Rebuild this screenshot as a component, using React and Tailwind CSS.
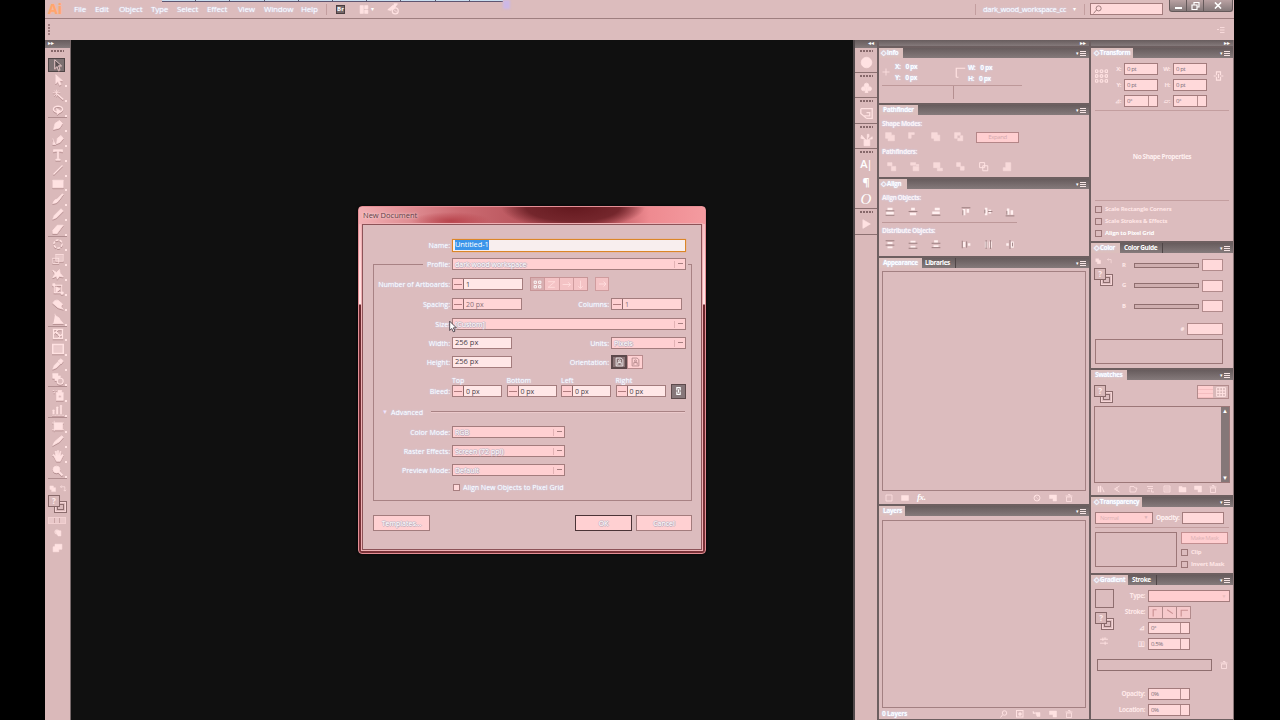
import React from "react";

const glow = "[text-shadow:0_0_1px_#ccd3f4,0_0_2px_#d5dbf2]";
const dark = "bg-gradient-to-b from-[#675c5d] to-[#857a7b]";
const heading = `ml-[3px] text-[6.500px] leading-[8px] font-bold text-[#fff4f4] ${glow}`;
const pale = "text-white [text-shadow:1px_0_0_#bcafc0,-1px_0_0_#cdbfcb,0_1px_0_#b8a8b8,0_-1px_0_#cdbfcb]";

function Svg({ children, className = "w-[13px] h-[13px]" }) {
  return (
    <svg viewBox="0 0 16 16" className={`shrink-0 ${className}`} fill="#ffe2e2" stroke="#ffe2e2" strokeWidth="1">
      {children}
    </svg>
  );
}

const P = (d, fill = true) => <path d={d} {...(fill ? {} : { fill: "none", strokeWidth: 1.6 })} />;

const toolGroups = [
  {
    h: "h-[61px]",
    items: [
      <path key="a" d="M5 1v12l3-3 2 5 2-1-2-5h4z" fill="#5b4f51" />,
      P("M5 1v12l3-3 2 5 2-1-2-5h4z"),
      <g key="w"><path d="M7 7l8 7" strokeWidth="2" /><path d="M6 1v9M1 5h10M3 2l6 7M9 2L3 9" /></g>,
      <g key="l"><ellipse cx="8" cy="7" rx="6" ry="4" fill="none" strokeWidth="2" /><path d="M6 6l1 8 5-4z" /></g>,
    ],
  },
  {
    h: "h-[119px]",
    items: [
      P("M2 14l2-8 6-4 4 4-4 6z"),
      P("M6 13l1-7 5-4 3 4-4 5zM1 6q2 3 0 8h4"),
      P("M2 4V1h12v3h-1l-1-1H9v10l2 1v1H5v-1l2-1V3H4L3 4z"),
      P("M2 14L14 2", false),
      P("M1 3h14v10H1z"),
      P("M1 14q2-6 6-6l7-7 1 1-6 8q-2 4-8 4z"),
      P("M1 15l2-5 9-9 3 3-9 9z"),
      P("M1 10l6-7h8l-6 8-2 3H1z"),
    ],
  },
  {
    h: "h-[90px]",
    items: [
      <circle key="c" cx="8" cy="8" r="5.5" fill="none" strokeWidth="2" strokeDasharray="4 1.5" />,
      <g key="s"><rect x="1" y="7" width="8" height="7" fill="none" /><rect x="5" y="2" width="10" height="9" fillOpacity=".6" /></g>,
      P("M1 3l5 3 4-4 1 5 4 5-5-1-3 4-1-4-5 2 3-5z"),
      <g key="f"><rect x="3" y="3" width="10" height="10" fill="none" strokeWidth="1.5" /><path d="M1 1h3v3H1zM12 12h3v3h-3zM5 5v8l6-5z" /></g>,
      P("M1 7q2-5 7-4l6 5-2 4 3 3-7-2z"),
      P("M4 1v13M4 3l6 4v6H2M10 8l5 6H1"),
    ],
  },
  {
    h: "h-[60px]",
    items: [
      <g key="m"><rect x="2" y="2" width="12" height="12" fill="none" strokeWidth="2" /><path d="M2 8q4-5 6 0t6 0M8 2q-5 4 0 6t0 6" fill="none" strokeWidth="1.7" /></g>,
      <g key="g"><rect x="1" y="2" width="14" height="12" fillOpacity=".65" strokeWidth="2" /></g>,
      P("M1 15l2-5 5-5 3 3-5 5zM8 4l4-3 3 3-3 4z"),
      <g key="b"><rect x="1" y="1" width="7" height="6" /><rect x="4" y="4" width="7" height="6" /><circle cx="11" cy="11" r="4" fill="#dcbcbd" strokeWidth="1.6" /></g>,
    ],
  },
  {
    h: "h-[31px]",
    items: [
      <g key="y"><path d="M1 2h2M2 5h2M5 2h1" /><rect x="6" y="5" width="9" height="10" /><path d="M8 2h5v3H8z" /><circle cx="10.500" cy="10" r="2" fill="#dcbcbd" /></g>,
      P("M1 14V8h2v6M6 14V4h2v10M11 14V2h2v12M0 15h16"),
    ],
  },
  {
    h: "h-[61px]",
    items: [
      P("M3 4h11v9H3zM0 4h16M0 13h16M3 1v14"),
      P("M1 14q2-6 7-9l5-4 2 2-5 6z"),
      P("M3 9L1 7l1-1 3 2-1-6h2l1 5V1h2v6l2-5h1l-1 6 3-2 1 1-4 8H6z"),
      <g key="z"><circle cx="6" cy="6" r="4.500" /><path d="M9 9l5 5" strokeWidth="2.500" /></g>,
    ],
  },
];

function Grip() {
  return <div className="mx-auto h-[2px] w-[13px] shrink-0 bg-[repeating-linear-gradient(90deg,#86686a_0_2px,transparent_2px_3px)]" />;
}

function FillStroke({ mark = "?" }) {
  return (
    <div className="grid h-[18px] w-[19px] shrink-0 grid-cols-[6px_6px_7px] grid-rows-[6px_6px_6px]">
      <div className="col-start-2 col-end-4 row-start-2 row-end-4 border-2 border-[#f6d5d6] p-[1px] outline-1 -outline-offset-1 outline-[#8c6c6d]">
        <div className="h-full border border-[#8c6c6d]" />
      </div>
      <div className="z-10 col-start-1 col-end-3 row-start-1 row-end-3 flex items-center justify-center border border-[#876768] bg-[#d9b8b9] text-[8px] leading-none font-bold text-[#ffeaea]">
        {mark}
      </div>
    </div>
  );
}

function Toolbar() {
  return (
    <div className="flex w-[26px] shrink-0 flex-col border-r border-[#77696a] bg-[#dab9ba]">
      <div className={`h-[8px] pl-[3px] text-[6px] leading-[7px] text-white ${dark}`}>▸▸</div>
      <div className="flex h-[9px] flex-col pt-[2px]"><Grip /></div>
      {toolGroups.map((g, gi) => (
        <div key={gi} className={`mx-[3px] flex shrink-0 flex-col justify-around border-b border-[#b18e90] ${g.h}`}>
          {g.items.map((it, i) => (
            <div
              key={i}
              className={
                gi === 0 && i === 0
                  ? "mr-[2px] flex h-[14px] items-center justify-center border border-[#4f4546] bg-[#7c7071]"
                  : "flex h-[14px] items-center justify-center"
              }
            >
              <Svg className="h-[12px] w-[12px] drop-shadow-[0_1px_0_#b58f91]">{it}</Svg>
              {gi + i > 0 && <span className="-mr-[3px] ml-px h-[2px] w-[2px] self-end bg-[#ffe2e2]" />}
            </div>
          ))}
        </div>
      ))}
      <div className="mt-[2px] flex h-[14px] shrink-0 items-center gap-[4px] pl-[4px]">
        <Svg className="h-[7px] w-[7px]">{P("M2 2h8v8H2zM6 6h9v9H6z")}</Svg>
        <Svg className="h-[7px] w-[7px]">{P("M1 4h10v10M4 1L1 4l3 3M8 11l3 3 3-3", false)}</Svg>
      </div>
      <div className="pl-[3px]"><FillStroke /></div>
      <div className="mt-[4px] ml-[3px] flex h-[7px] w-[18px] shrink-0 divide-x divide-[#caa5a6] border border-[#f2d0d1] bg-[#e9c8c9]">
        <span className="flex-1" /><span className="flex-1" /><span className="flex-1" />
      </div>
      <div className="mt-[4px] flex h-[10px] justify-center"><Svg className="h-[9px] w-[9px]"><circle cx="7" cy="7" r="4" fillOpacity=".6" /><path d="M5 5h9v9H9z" /></Svg></div>
      <div className="mt-[5px] flex h-[10px] justify-center"><Svg className="h-[10px] w-[13px]">{P("M4 2h11v8H4zM1 6h9v8H1z")}</Svg></div>
    </div>
  );
}

function Tab({ children, active, className = "" }) {
  return (
    <div
      className={`flex shrink-0 items-center pt-px text-[6.5px] leading-none font-bold whitespace-nowrap text-white ${
        active ? `bg-[#dcbfbd] ${glow}` : "border-r border-[#4f4546]"
      } ${className}`}
    >
      {children}
    </div>
  );
}

function Panel({ tabs, className, children }) {
  return (
    <section className={`flex shrink-0 flex-col border-t-2 border-[#6d5f60] bg-[#dcbcbe] ${className}`}>
      <div className={`flex h-[10px] shrink-0 ${dark}`}>
        {tabs}
        <div className="mr-[3px] ml-auto flex items-center gap-px">
          <span className="text-[5px] leading-none text-white">▾</span>
          <span className="h-[5px] w-[6px] border-y border-[#f6e4e4] bg-[linear-gradient(transparent_1px,#f6e4e4_1px,#f6e4e4_2px,transparent_2px)]" />
        </div>
      </div>
      {children}
    </section>
  );
}

function Field({ className = "", edge = "border-[#a37c7d]", children }) {
  return (
    <div className={`flex shrink-0 items-center border whitespace-nowrap leading-none ${edge} ${className}`}>{children}</div>
  );
}

function MiniField({ value, split, className }) {
  return (
    <Field className={`h-[12px] bg-[#ffd9da] pl-[2px] text-[6px] text-[#7b6e78] ${className}`}>
      {value}
      {split && <span className="ml-auto h-full w-[9px] border-l border-[#b48d8e]" />}
    </Field>
  );
}

function Check({ label, className = "" }) {
  return (
    <div className={`flex h-[8px] items-center gap-[3px] text-[6px] leading-none font-bold tracking-[-0.22px] whitespace-nowrap text-[#ffe6e6] ${className}`}>
      <span className="h-[7px] w-[7px] shrink-0 border border-[#9c7778]" />
      {label}
    </div>
  );
}

const shapes = [
  "M1 1h9v4h5v9H5v-4H1z",
  "M1 1h9v3H5v6H1z",
  "M1 1h9v9H1zM5 5h9v9H5z",
  "M1 1h9v4H5v5H1zM10 6h4v8H6v-4h4z",
];
const finders = [
  "M1 1h7v5H1zM7 7h7v7H7z",
  "M1 1h8v4H1zM5 7h9v7H5zM10 4h4v2h-4z",
  "M1 1h10v8H1zM7 10h8v4H7z",
  "M1 1h6v6H1zM7 7h6v6H7z",
];

function InfoColumn() {
  return (
    <div className="flex w-[212px] shrink-0 flex-col border-r-2 border-[#6d5f60] tracking-[-0.42px]">
      <div className={`h-[6px] pr-[3px] text-right text-[6px] leading-[7px] tracking-normal text-white ${dark}`}>▸▸</div>
      <Panel className="h-[57px]" tabs={<Tab active className="w-[24px] pl-[2px]">◇ Info</Tab>}>
        <div className={`flex px-[3px] pt-[3px] text-[6.500px] leading-[11px] font-bold text-white ${glow}`}>
          <Svg className="mt-[7px] h-[8px] w-[8px]">{P("M8 1v14M1 8h14", false)}</Svg>
          <div className="ml-[5px] w-[59px]">X: &nbsp; &nbsp;0 px<br />Y: &nbsp; &nbsp;0 px</div>
          <div className="flex w-[70px] pt-px">
            <Svg className="mt-[4px] h-[12px] w-[12px]">{P("M3 15V3h12M3 15h3", false)}</Svg>
            <div className="ml-[2px] whitespace-nowrap">W: &nbsp; &nbsp;0 px<br />H: &nbsp; &nbsp;0 px</div>
          </div>
        </div>
        <div className="mt-[1px] ml-[3px] h-[14px] w-[140px] border-t border-[#bd9899]">
          <div className="ml-[71px] h-[13px] border-l border-[#b48f90]" />
        </div>
      </Panel>
      <Panel className="h-[74px]" tabs={<Tab active className="w-[39px] pl-[4px]">Pathfinder</Tab>}>
        <div className={`mt-[5px] ${heading}`}>Shape Modes:</div>
        <div className="mt-[3px] flex h-[12px] items-center gap-[13px] pl-[6px]">
          {shapes.map((d, i) => <Svg key={i} className="h-[10px] w-[10px] opacity-80">{P(d)}</Svg>)}
          <Field edge="border-[#b48688]" className="-ml-px h-[11px] w-[43px] justify-center bg-[#ffced0] text-[6px] text-[#d3a9ae]">Expand</Field>
        </div>
        <div className={`mt-[5px] ${heading}`}>Pathfinders:</div>
        <div className="mt-[6px] flex h-[10px] items-center gap-[13px] pl-[8px]">
          {finders.map((d, i) => <Svg key={i} className="h-[10px] w-[10px] opacity-80">{P(d)}</Svg>)}
          <Svg className="h-[10px] w-[10px]">{P("M1 1h8v8H1zM6 6h8v8H6z", false)}</Svg>
          <Svg className="h-[10px] w-[10px] opacity-80">{P("M6 1h8v13H2V9h4z")}</Svg>
        </div>
      </Panel>
      <Panel className="h-[79px]" tabs={<Tab active className="w-[28px] pl-[2px]">◇ Align</Tab>}>
        <div className={`mt-[5px] ${heading}`}>Align Objects:</div>
        <AlignRow kind="align" />
        <div className="mt-[5px] ml-[3px] h-px w-[135px] shrink-0 bg-[#bd9899]" />
        <div className={`mt-[4px] ${heading}`}>Distribute Objects:</div>
        <AlignRow kind="distribute" />
      </Panel>
      <Panel
        className="h-[248px]"
        tabs={<><Tab active className="w-[43px] pl-[4px]">Appearance</Tab><Tab className="w-[34px] pl-[3px]">Libraries</Tab></>}
      >
        <div className="mx-[3px] mt-[3px] h-[220px] shrink-0 border border-[#a38082]" />
        <div className="flex h-[13px] items-center gap-[8px] pl-[6px]">
          <Svg className="h-[8px] w-[8px]">{P("M2 2h12v12H2z", false)}</Svg>
          <Svg className="h-[8px] w-[8px]">{P("M1 3h14v10H1z")}</Svg>
          <span className="font-['Liberation_Serif',serif] text-[9px] leading-none font-bold text-white italic">fx.</span>
          <span className="ml-auto flex gap-[8px] pr-[16px]">
            <Svg className="h-[8px] w-[8px]"><circle cx="8" cy="8" r="6" fill="none" strokeWidth="2" /><path d="M4 4l8 8" /></Svg>
            <NewIcon /><Trash />
          </span>
        </div>
      </Panel>
      <Panel className="h-[215px]" tabs={<Tab active className="w-[26px] pl-[4px]">Layers</Tab>}>
        <div className="mx-[3px] mt-[4px] h-[188px] shrink-0 border border-[#a38082]" />
        <div className={`flex h-[13px] items-center pl-[3px] text-[6.500px] font-bold tracking-[-0.2px] text-white ${glow}`}>
          0 Layers
          <span className="ml-auto flex gap-[8px] pr-[16px]">
            <Svg className="h-[8px] w-[8px]"><circle cx="9" cy="6" r="4.500" fill="none" strokeWidth="2" /><path d="M5 10l-4 5" strokeWidth="2" /></Svg>
            <Svg className="h-[8px] w-[8px]"><rect x="1" y="1" width="13" height="13" fill="none" strokeWidth="2" /><circle cx="8" cy="8" r="3" /></Svg>
            <Svg className="h-[8px] w-[9px]">{P("M1 2v5h5M6 5h9v8H9z")}</Svg>
            <NewIcon /><Trash />
          </span>
        </div>
      </Panel>
      <div className="h-px bg-[#6d5f60]" />
    </div>
  );
}

const NewIcon = () => <Svg className="h-[8px] w-[8px]">{P("M1 2h14v12H8V9H1z")}</Svg>;
const Trash = () => <Svg className="h-[8px] w-[8px]">{P("M3 6h10v9H3zM1 4h14M6 1h4v3", false)}</Svg>;

function AlignRow({ kind }) {
  const a = kind === "align";
  const horiz = a
    ? [["M4 2h8v4H4zM2 8h12v5H2z", "M1 7h14M1 14h14"], ["M5 2h6v4H5zM3 10h10v4H3z", "M1 8h14"], ["M6 2h8v4H6zM2 8h12v4H2z", "M1 14h14"]]
    : [["M4 4h8v3H4zM4 11h8v3H4z", "M1 2h14M1 9h14"], ["M4 2h8v3H4zM4 10h8v3H4z", "M1 6h14M1 14h14"], ["M5 1h6v4H5zM4 9h8v3H4z", "M1 6h14M1 13h14"]];
  const vert = a
    ? [["M3 4h4v10H3zM9 4h4v6H9z", "M1 2h14M3 6v8"], ["M3 2h4v12H3zM9 5h4v6H9z", "M3 5v6M8 8h7"], ["M3 3h4v10H3zM9 6h4v7H9z", "M1 15h14M3 7v6"]]
    : [["M3 4h4v8H3zM11 6h4v4h-4z", "M2 2v12M9 3v10"], ["M3 3h4v10H3zM10 3h4v10h-4z", "M5 1v14M12 1v14"], ["M2 6h4v4H2zM9 3h5v10H9z", "M8 1v14M12 5v6"]];
  const draw = ([shape, rule]) => (
    <svg key={shape} viewBox="0 0 16 16" className="h-[11px] w-[10px]"><path d={shape} fill="#fff0f0" /><path d={rule} stroke="#8f7274" strokeWidth="1.300" /></svg>
  );
  return (
    <div className="mt-[4px] flex h-[11px] shrink-0 items-center pl-[6px]">
      <div className="flex gap-[13px]">{horiz.map(draw)}</div>
      <div className="ml-[20px] flex gap-[12px]">{vert.map(draw)}</div>
    </div>
  );
}

function PropertiesColumn() {
  const label = "shrink-0 pr-[3px] text-right text-[6px] font-bold text-[#ffe6e6]";
  return (
    <div className="flex w-[143px] shrink-0 flex-col border-r border-[#8c7879] tracking-[-0.42px]">
      <div className={`h-[6px] pr-[3px] text-right text-[6px] leading-[7px] tracking-normal text-white ${dark}`}>▸▸</div>
      <Panel className="h-[195px]" tabs={<Tab active className="w-[42px] pl-[3px]">◇ Transform</Tab>}>
        <div className="mx-[4px] flex h-[53px] shrink-0 border-b border-[#c39e9f]">
          <Svg className="mt-[11px] h-[14px] w-[13px]">
            {[2, 8, 14].map((y) => [2, 8, 14].map((x) => <circle key={`${x}${y}`} cx={x} cy={y} r="1.700" fill="none" strokeWidth="1.500" />))}
          </Svg>
          <div className="mt-[5px] flex flex-col gap-[4px]">
            {[["X:", "0 pt", "W:", "0 pt"], ["Y:", "0 pt", "H:", "0 pt"], ["⊿:", "0°", "▱:", "0°"]].map((r, i) => (
              <div key={i} className="flex items-center">
                <span className={`${label} w-[16px]`}>{r[0]}</span>
                <MiniField value={r[1]} split={i === 2} className="w-[34px]" />
                <span className={`${label} w-[15px]`}>{r[2]}</span>
                <MiniField value={r[3]} split={i === 2} className="w-[34px]" />
              </div>
            ))}
          </div>
          <Svg className="mt-[12px] ml-[6px] h-[12px] w-[11px]">{P("M5 7V2h6v5M5 9v5h6V9M8 5v6M1 8h3M12 8h3", false)}</Svg>
        </div>
        <div className="mx-[4px] flex h-[90px] shrink-0 items-center justify-center border-b border-[#c39e9f] pt-[2px] text-[6.500px] font-bold text-[#fff0f0]">No Shape Properties</div>
        <Check className="mt-[4px] ml-[4px]" label="Scale Rectangle Corners" />
        <Check className="mt-[4px] ml-[4px]" label="Scale Strokes & Effects" />
        <Check className="mt-[4px] ml-[4px] text-white" label="Align to Pixel Grid" />
      </Panel>
      <Panel
        className="h-[127px]"
        tabs={<><Tab active className="w-[29px] pl-[3px]">◇ Color</Tab><Tab className="w-[43px] pl-[4px]">Color Guide</Tab></>}
      >
        <div className="flex h-[64px] shrink-0 pl-[3px]">
          <div className="w-[28px]">
            <div className="flex h-[15px] items-center gap-[6px] pl-px">
              <Svg className="h-[6px] w-[6px]">{P("M2 2h8v8H2zM6 6h9v9H6z")}</Svg>
              <Svg className="h-[6px] w-[6px]">{P("M1 4h10v10M4 1L1 4l3 3", false)}</Svg>
            </div>
            <FillStroke />
          </div>
          <div className="flex flex-col gap-[8.500px] pt-[6px]">
            {["R", "G", "B"].map((c) => (
              <div key={c} className="flex h-[12px] items-center">
                <span className="w-[12px] text-[6px] font-bold text-[#ffe9e9]">{c}</span>
                <span className="h-[5px] w-[65px] border border-[#8f6e6f] bg-[#cfaeaf]" />
                <span className="ml-[3px] h-[12px] w-[21px] border border-[#b28b8c] bg-[#ffd9da]" />
              </div>
            ))}
          </div>
        </div>
        <div className="mt-[6px] mr-[10px] flex shrink-0 items-center justify-end gap-[3px] text-[6px] font-bold text-[#ffe9e9]">
          #<span className="h-[12px] w-[36px] border border-[#b28b8c] bg-[#ffd9da]" />
        </div>
        <div className="mt-[4px] ml-[4px] h-[25px] w-[128px] shrink-0 border border-[#9c7778]" />
      </Panel>
      <Panel className="h-[127px]" tabs={<Tab active className="w-[36px] pl-[4px]">Swatches</Tab>}>
        <div className="flex h-[26px] shrink-0 pt-[5px] pr-[4px] pl-[3px]">
          <FillStroke />
          <div className="ml-auto flex h-[14px] w-[32px] border border-[#b28b8c]">
            <span className="flex-1 bg-[repeating-linear-gradient(#ffcfd0_0_3px,#f4bdbf_3px_4px)]" />
            <span className="flex flex-1 items-center justify-center bg-[#d9b8b9]"><Svg className="h-[10px] w-[10px]">{P("M1 1h14v14H1zM6 1v14M10.500 1v14M1 6h14M1 10.500h14", false)}</Svg></span>
          </div>
        </div>
        <div className="mr-[3px] ml-[3px] flex h-[77px] shrink-0 border border-[#9c7778]">
          <div className="ml-auto flex w-[8px] flex-col justify-between bg-[#857778] text-center text-[6px] leading-[8px] tracking-normal text-white"><span>▲</span><span>▼</span></div>
        </div>
        <div className="flex h-[13px] items-center justify-between pr-[16px] pl-[5px]">
          <Svg className="h-[8px] w-[10px]">{P("M2 3v11h2V3zM6 2v12h2V2zM10 4l3 10h2")}</Svg>
          <Svg className="h-[8px] w-[8px]">{P("M13 2L3 8l10 6M8 4v8", false)}</Svg>
          <Svg className="h-[8px] w-[11px]">{P("M1 3h8l2 3h4l-3 8H1z", false)}</Svg>
          <Svg className="h-[8px] w-[9px]">{P("M1 3h12M3 7h10M1 12h6M10 9v5h5", false)}</Svg>
          <Svg className="h-[8px] w-[8px]">{P("M2 2h12v12H2zM4 6h9M4 10h9", false)}</Svg>
          <Svg className="h-[8px] w-[9px]">{P("M1 3h6l1 2h7v9H1z")}</Svg>
          <NewIcon /><Trash />
        </div>
      </Panel>
      <Panel className="h-[78px]" tabs={<Tab active className="w-[51px] pl-[3px]">◇ Transparency</Tab>}>
        <div className="mx-[4px] flex h-[21px] shrink-0 items-center border-b border-[#c39e9f] pt-px text-[6.500px] font-bold text-[#fff0f0]">
          <Field className="h-[12px] w-[58px] bg-[#ffced0] px-[4px] text-[6px] font-normal text-[#dcb1b5]">Normal<span className="ml-auto text-[5px]">▼</span></Field>
          <span className="mx-[3px] w-[23px]">Opacity:</span>
          <Field className="h-[12px] w-[42px] bg-[#ffd9da]" />
        </div>
        <div className="mt-[4px] ml-[4px] flex gap-[4px]">
          <div className="h-[35px] w-[82px] border border-[#9c7778]" />
          <div>
            <Field edge="border-[#c38f91]" className="h-[12px] w-[47px] justify-center bg-[#ffced0] text-[6px] text-[#dcb1b5]">Make Mask</Field>
            <Check className="mt-[4px]" label="Clip" />
            <Check className="mt-[4px]" label="Invert Mask" />
          </div>
        </div>
      </Panel>
      <Panel
        className="h-[146px]"
        tabs={<><Tab active className="w-[37px] pl-[3px]">◇ Gradient</Tab><Tab className="w-[29px] pl-[4px]">Stroke</Tab></>}
      >
        <div className="flex pt-[4px] pl-[4px]">
          <div className="flex w-[24px] flex-col">
            <div className="h-[19px] w-[19px] border border-[#8f6e6f]" />
            <div className="mt-[4px]"><FillStroke /></div>
            <Svg className="mt-[7px] ml-[3px] h-[9px] w-[12px]">{P("M1 4h14M1 11h14M6 1v6M10 8v6M8 2h4", false)}</Svg>
          </div>
          <div className="flex flex-col gap-[4px] pt-px">
            <GradRow label="Type:"><Field className="h-[12px] w-[82px] bg-[#ffced0] pr-[3px] text-[5px] text-[#eabdbd]"><span className="ml-auto">▼</span></Field></GradRow>
            <GradRow label="Stroke:">
              <div className="flex h-[13px] w-[43px] divide-x divide-[#b28b8c] border border-[#b28b8c] bg-[#f6c9cb]">
                {["M3 15V3h6", "M3 3l10 7", "M3 15V4h12"].map((d) => <span key={d} className="flex flex-1 items-center justify-center"><svg viewBox="0 0 16 16" className="h-[9px] w-[10px]" fill="none" stroke="#c99193" strokeWidth="2"><path d={d} /></svg></span>)}
              </div>
            </GradRow>
            <GradRow label="⊿"><MiniField split value="0°" className="w-[42px]" /></GradRow>
            <GradRow label="▯▯"><MiniField split value="0.5%" className="w-[42px]" /></GradRow>
          </div>
        </div>
        <div className="mt-[9px] ml-[6px] flex h-[12px] shrink-0 items-center gap-[8px]">
          <span className="h-[12px] w-[115px] border border-[#8f6e6f]" /><Trash />
        </div>
        <div className="mt-[17px] ml-[28px] flex flex-col gap-[4px]">
          <GradRow label="Opacity:"><MiniField split value="0%" className="w-[42px]" /></GradRow>
          <GradRow label="Location:"><MiniField split value="0%" className="w-[42px]" /></GradRow>
        </div>
      </Panel>
      <div className="h-px bg-[#6d5f60]" />
    </div>
  );
}

function GradRow({ label, children }) {
  return (
    <div className="flex h-[12px] shrink-0 items-center">
      <span className="flex w-[29px] shrink-0 justify-end pr-[3px] text-[6.500px] font-bold whitespace-nowrap text-[#ffe9e9]">{label}</span>
      {children}
    </div>
  );
}

function Strip() {
  const cell = "flex shrink-0 flex-col items-center border-b border-[#8c7071] pt-[2px]";
  return (
    <div className="flex w-[26px] shrink-0 flex-col border-r-2 border-l-2 border-r-[#6d5f60] border-l-[#50484a] bg-[#dab9ba]">
      <div className={`h-[8px] pr-[3px] text-right text-[6px] leading-[7px] text-white ${dark}`}>◂◂</div>
      <div className={`${cell} h-[25px]`}><Grip /><Svg className="mt-[4px] h-[13px] w-[13px]"><circle cx="8" cy="8" r="6.500" /></Svg></div>
      <div className={`${cell} h-[25px]`}><Grip /><Svg className="mt-[5px] h-[12px] w-[13px]"><circle cx="8" cy="4.500" r="3" /><circle cx="4" cy="9" r="2.700" /><circle cx="12" cy="9" r="2.700" /><path d="M8 5l2 9H6z" /></Svg></div>
      <div className={`${cell} h-[26px]`}><Grip /><Svg className="mt-[5px] h-[13px] w-[13px]">{P("M1 2h14v12H8M1 2v6l7 6M8 7h4v4H5", false)}</Svg></div>
      <div className={`${cell} h-[25px]`}><Grip /><Svg className="mt-[5px] h-[14px] w-[13px]">{P("M5 8h7v7H5zM7 8L2 2l-1 4M9 8V1h2v3M10 8l5-4v3")}</Svg></div>
      <div className={`${cell} h-[60px] text-white`}>
        <Grip />
        <span className="mt-[5px] text-[11px] leading-[12px] font-semibold tracking-[-1px]">A|</span>
        <span className="mt-[6px] text-[11px] leading-[12px] font-bold">¶</span>
        <span className="mt-[4px] font-['Liberation_Serif',serif] text-[15px] leading-[14px] italic">O</span>
      </div>
      <div className={`${cell} h-[26px]`}><Grip /><Svg className="mt-[6px] h-[10px] w-[12px]">{P("M3 1l12 7-12 7z")}</Svg></div>
    </div>
  );
}

const menus = [
  ["File", "w-[21px]"], ["Edit", "w-[24px]"], ["Object", "w-[32px]"], ["Type", "w-[26px]"], ["Select", "w-[30px]"],
  ["Effect", "w-[31px]"], ["View", "w-[26px]"], ["Window", "w-[37px]"], ["Help", "w-[25px]"],
];

function MenuBar() {
  return (
    <div className="relative flex h-[19px] shrink-0 items-center border-b border-[#9f7f80] bg-[#dcbcbd] text-[8px] text-white">
      <span className="ml-[3px] w-[26px] text-[14px] leading-none font-bold text-[#ffa56e] [text-shadow:0_0_2px_#ffb98c]">Ai</span>
      {menus.map(([m, w]) => <span key={m} className={`shrink-0 tracking-[-0.15px] ${w} ${glow}`}>{m}</span>)}
      <span className="h-[11px] w-px bg-[#c39e9f]" />
      <span className="ml-[9px] flex h-[9px] w-[9px] items-center justify-center border border-[#4a3e3f] bg-[#75686a] text-[6px] leading-none font-bold">Br</span>
      <Svg className="ml-[14px] h-[9px] w-[10px]">{P("M1 1h6v14H1zM9 1h6v6H9zM9 9h6v6H9z")}</Svg>
      <span className="ml-[2px] text-[6px]">▾</span>
      <Svg className="ml-[12px] h-[12px] w-[14px]"><path d="M1 9L8 3l3 2-6 5zM9 1h5L9 8" /><circle cx="11" cy="10.500" r="4" fill="none" strokeWidth="1.600" /><path d="M8 8l6 5" /></Svg>
      <div className="ml-auto flex items-center self-start">
        <span className="mt-[3px] h-[11px] w-px bg-[#c39e9f]" />
        <span className={`mt-[3px] ml-[7px] w-[84px] text-[7.500px] leading-[12px] tracking-[-0.3px] whitespace-nowrap ${glow}`}>dark_wood_workspace_cc</span>
        <span className="mt-[3px] ml-[6px] text-[6px]">▾</span>
        <span className="mt-[3px] ml-[8px] h-[11px] w-px bg-[#c39e9f]" />
        <Field className="mt-[3px] ml-[5px] h-[12px] w-[73px] bg-[#ffd9da] pl-[2px]">
          <svg viewBox="0 0 16 16" className="h-[9px] w-[9px]" fill="none" stroke="#8f6e6f" strokeWidth="1.500"><circle cx="10" cy="6" r="4.500" /><path d="M6 9l-5 6" /></svg>
        </Field>
        <div className="mr-px ml-[6px] flex h-[12px] w-[64px] self-start divide-x divide-[#65595a] rounded-b-[3px] border border-t-0 border-[#65595a] bg-gradient-to-b from-[#b9a1a2] to-[#85797a]">
          <span className="flex w-[17px] items-center justify-center pt-[4px]"><span className="h-[2px] w-[7px] bg-white" /></span>
          <span className="flex w-[17px] items-center justify-center"><svg viewBox="0 0 16 16" className="h-[8px] w-[9px]" fill="none" stroke="#fff" strokeWidth="2.300"><path d="M5 5V1h10v9h-4M1 6h10v9H1z" /></svg></span>
          <span className="flex flex-1 items-center justify-center"><svg viewBox="0 0 16 16" className="h-[7px] w-[8px]" stroke="#fff" strokeWidth="3.500"><path d="M1 1l14 14M15 1L1 15" /></svg></span>
        </div>
      </div>
      <div className="absolute top-0 left-[117px] flex h-[2px] w-[341px] divide-x divide-[#5a5a70] border-b border-[#5f5570] bg-[#c9def0]">
        {Array.from({ length: 10 }, (_, i) => <span key={i} className="flex-1" />)}
      </div>
      <div className="absolute top-0 left-[458px] h-[9px] w-[7px] bg-[#cdb8e6] blur-[1px]" />
    </div>
  );
}

function DLabel({ children, className = "w-[76px]" }) {
  return <span className={`shrink-0 text-right whitespace-nowrap text-white ${glow} ${className}`}>{children}</span>;
}

function Select({ value, className }) {
  return (
    <Field className={`h-[12px] bg-[#ffd0d2] pl-[2px] ${pale} ${className}`}>
      {value}
      <span className="ml-auto flex h-[7px] w-[11px] justify-center border-l border-[#e2b2b4] pt-[2px]"><span className="h-px w-[5px] bg-[#a77f80]" /></span>
    </Field>
  );
}

function Spin({ value, className, dim }) {
  return (
    <Field className={`h-[12px] text-[7px] ${dim ? "bg-[#ffd5d6] text-[#8a7076]" : "bg-[#ffe7e7] text-[#494149]"} ${className}`}>
      <span className="mr-[2px] flex h-full w-[11px] shrink-0 items-center border-r border-[#8f6a6c] bg-[#ffd0d2] px-[1px]"><span className="h-px w-full bg-[#b07c7e]" /></span>
      {value}
    </Field>
  );
}

function Dialog() {
  const row = "flex h-[12px] shrink-0 items-center gap-[2px]";
  return (
    <div className="absolute top-[206px] left-[358px] flex h-[348px] w-[348px] flex-col rounded-[4px] border border-[#e58f96] bg-[linear-gradient(#f3b3b7_0,#ffd9da_60px,#ffe4e4_97px,#6a272d_98px,#7a3238_100%)] px-[3px] pb-[3px] font-['Open_Sans','Noto_Sans',sans-serif] text-[7px] leading-none shadow-[0_0_3px_#000]">
      <div className="-mx-[3px] flex h-[17px] shrink-0 items-center rounded-t-[3px] bg-[radial-gradient(ellipse_72px_22px_at_214px_0px,#64191f_0,#74262c_65%,transparent_100%),radial-gradient(ellipse_40px_9px_at_92px_14px,#b8444c,transparent),linear-gradient(90deg,#f3b0b4,#cc6b72_100px,#a53f47_230px,#ee8a90_290px,#f49ba0)] pl-[4px] text-[7.500px] text-[#5f3c44] [text-shadow:0_0_3px_#fff]">
        New Document
      </div>
      <div className="flex flex-1 flex-col border border-[#8d5358] bg-[#dcbcbe] shadow-[0_0_0_1px_#efb0b4]">
        <div className={`${row} mt-[14px] ml-[11px]`}>
          <DLabel>Name:</DLabel>
          <Field edge="border-[#db8628]" className="h-[13px] w-[234px] bg-[#f8eeee] pl-[2px] text-[7.500px] shadow-[0_0_1px_#f0a050]">
            <span className="bg-[#3b95ea] py-px tracking-[-0.1px] text-white">Untitled-1</span>
          </Field>
        </div>
        <div className="mt-[13px] ml-[10px] flex h-[237px] w-[319px] flex-col border-x border-b border-[#a88284]">
          <div className={`${row} -mt-[6px]`}>
            <span className="h-px w-[49px] shrink-0 bg-[#a88284]" />
            <DLabel className="w-[25px]">Profile:</DLabel>
            <Select className="w-[234px]" value="dark wood workspace" />
            <span className="h-px w-[3px] shrink-0 bg-[#a88284]" />
          </div>
          <div className={`${row} mt-[8px]`}>
            <DLabel>Number of Artboards:</DLabel>
            <Spin value="1" className="w-[71px]" />
            <div className="ml-[5px] flex h-[14px] w-[58px] divide-x divide-[#cf9c9e] border border-[#c79597] bg-[#f4c3c5]">
              {["M2 2h4v4H2zM10 2h4v4h-4zM2 10h4v4H2zM10 10h4v4h-4z", "M2 3h12L2 13h12", "M1 8h14M11 4l4 4-4 4", "M8 1v14M4 11l4 4 4-4"].map((d, i) => (
                <span key={d} className={i ? "flex flex-1 items-center justify-center" : "flex flex-1 items-center justify-center bg-[#d8aeb0]"}><svg viewBox="0 0 16 16" className="h-[9px] w-[9px]" fill="none" stroke={i ? "#ffdcdd" : "#fff"} strokeWidth="1.600"><path d={d} /></svg></span>
              ))}
            </div>
            <div className="ml-[5px] flex h-[14px] w-[14px] items-center justify-center border border-[#cf9c9e] bg-[#f4c3c5]"><svg viewBox="0 0 16 16" className="h-[8px] w-[9px]" stroke="#ffdcdd" fill="none" strokeWidth="2"><path d="M1 8h14M10 3l5 5-5 5" /></svg></div>
          </div>
          <div className={`${row} mt-[8px]`}>
            <DLabel>Spacing:</DLabel>
            <Spin dim value="20 px" className="w-[70px]" />
            <DLabel className="w-[85px]">Columns:</DLabel>
            <Spin dim value="1" className="w-[71px]" />
          </div>
          <div className={`${row} mt-[8px]`}><DLabel>Size:</DLabel><Select className="w-[234px]" value="[Custom]" /></div>
          <div className={`${row} mt-[7px]`}>
            <DLabel>Width:</DLabel>
            <Field className="h-[12px] w-[60px] bg-[#ffe7e7] pl-[2px] text-[7.500px] text-[#494149]">256 px</Field>
            <DLabel className="w-[95px]">Units:</DLabel>
            <Select className="w-[75px]" value="Pixels" />
          </div>
          <div className={`${row} mt-[7px]`}>
            <DLabel>Height:</DLabel>
            <Field className="h-[12px] w-[60px] bg-[#ffe7e7] pl-[2px] text-[7.500px] text-[#494149]">256 px</Field>
            <DLabel className="w-[95px]">Orientation:</DLabel>
            <div className="flex h-[14px]">
              <span className="flex w-[16px] items-center justify-center border-2 border-[#5d494b] bg-[#8b7375]"><PageIcon stroke="#fff" /></span>
              <span className="flex w-[16px] items-center justify-center border border-[#b98c8e] bg-[#ffd0d2]"><PageIcon stroke="#a98183" /></span>
            </div>
          </div>
          <div className="mt-[8px] flex h-[9px] shrink-0 pl-[78px]">
            {["Top", "Bottom", "Left", "Right"].map((t) => <span key={t} className={`w-[54.500px] leading-[10px] text-white ${glow}`}>{t}</span>)}
          </div>
          <div className={row}>
            <DLabel>Bleed:</DLabel>
            <div className="flex gap-[4.500px]">{[0, 1, 2, 3].map((i) => <Spin key={i} value="0 px" className="w-[50px]" />)}</div>
            <span className="ml-[3px] flex h-[15px] w-[15px] items-center justify-center border border-[#5d494b] bg-[#87777a]"><svg viewBox="0 0 16 16" className="h-[10px] w-[9px]" fill="none" stroke="#fff" strokeWidth="2"><path d="M5 7V2h6v5M5 9v5h6V9M8 5v6" /></svg></span>
          </div>
          <div className="mt-[11px] flex h-[8px] shrink-0 items-center pl-[8px]">
            <span className="w-[9px] text-[6px] text-[#efe4ff]">▼</span>
            <span className={`w-[40px] text-white ${glow}`}>Advanced</span>
            <span className="h-[2px] w-[254px] border-t border-[#a88284] bg-[#ebc9cb]" />
          </div>
          <div className={`${row} mt-[10px]`}><DLabel>Color Mode:</DLabel><Select className="w-[113px]" value="RGB" /></div>
          <div className={`${row} mt-[7px]`}><DLabel>Raster Effects:</DLabel><Select className="w-[113px]" value="Screen (72 ppi)" /></div>
          <div className={`${row} mt-[7px]`}><DLabel>Preview Mode:</DLabel><Select className="w-[113px]" value="Default" /></div>
          <div className={`mt-[7px] flex h-[8px] shrink-0 items-center pl-[79px] whitespace-nowrap text-white ${glow}`}>
            <span className="mr-[3px] h-[7px] w-[7px] border border-[#a87e80] bg-[#ffd9da]" />Align New Objects to Pixel Grid
          </div>
        </div>
        <div className={`mt-[14px] ml-[10px] flex h-[16px] w-[319px] ${pale}`}>
          <Field className="w-[57px] justify-center bg-[#ffd0d2]">Templates...</Field>
          <Field edge="border-[#4b3437]" className="ml-auto w-[57px] justify-center bg-[#ffd0d2]">OK</Field>
          <Field className="ml-[4px] w-[56px] justify-center bg-[#ffd0d2]">Cancel</Field>
        </div>
      </div>
    </div>
  );
}

function PageIcon({ stroke }) {
  return <svg viewBox="0 0 16 16" className="h-[10px] w-[9px]" fill="none" stroke={stroke} strokeWidth="1.400"><path d="M2 1h9l3 3v11H2z" /><circle cx="8" cy="6" r="1.800" /><path d="M5 13V9h6v4" /></svg>;
}

export default function App() {
  return (
    <div className="relative flex h-[720px] w-[1280px] flex-col overflow-hidden bg-black pr-[46px] pl-[45px] font-['Open_Sans','Liberation_Sans',sans-serif]">
      <MenuBar />
      <div className="flex h-[21px] shrink-0 items-center bg-[#dcbcbd] pr-[9px] pl-[3px]">
        <span className="h-[12px] w-[2px] bg-[repeating-linear-gradient(#a07d7f_0_2px,transparent_2px_3px)]" />
        <Svg className="ml-auto h-[8px] w-[9px]">{P("M1 7h4M7 3h9M7 8h9M7 13h9", false)}</Svg>
      </div>
      <div className="flex min-h-0 flex-1">
        <Toolbar />
        <div className="flex-1 bg-[#101010]" />
        <Strip />
        <InfoColumn />
        <PropertiesColumn />
      </div>
      <Dialog />
      <svg viewBox="0 0 12 18" className="absolute top-[320px] left-[449px] h-[13px] w-[8px]" fill="#fff" stroke="#403640" strokeWidth="1.300"><path d="M1 1v14l3-3 2.500 5 2.500-1-2.500-5H11z" /></svg>
    </div>
  );
}
